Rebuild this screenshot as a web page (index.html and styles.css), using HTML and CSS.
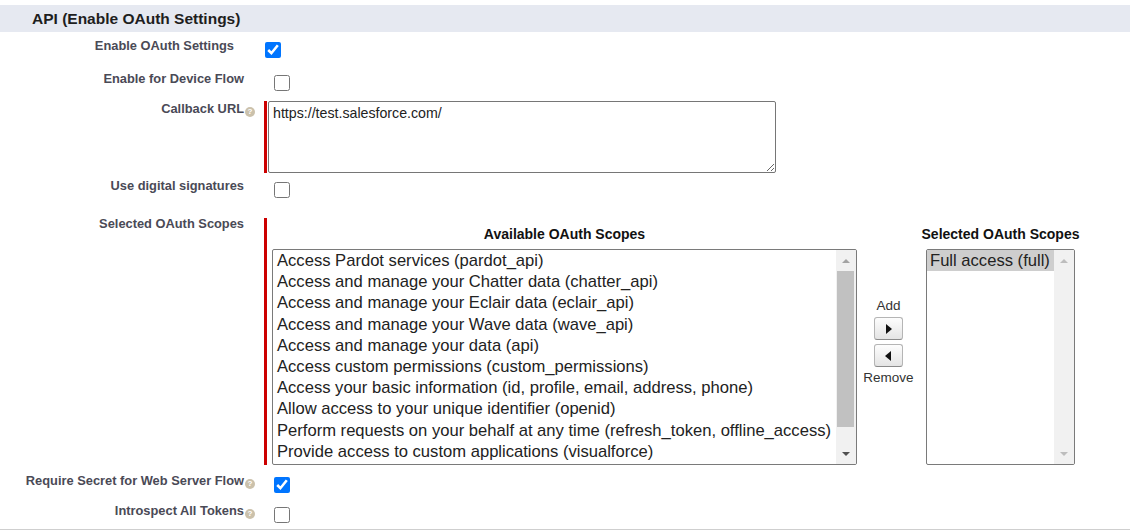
FILE: index.html
```html
<!DOCTYPE html>
<html lang="en">
<head>
<meta charset="utf-8">
<title>API (Enable OAuth Settings)</title>
<link rel="stylesheet" href="styles.css">
</head>
<body>
<div class="section">
  <div class="sub-header"><h3>API (Enable OAuth Settings)</h3></div>
  <div class="form">
    <div class="row row-first">
      <div class="label">Enable OAuth Settings</div>
      <div class="field"><input type="checkbox" class="cb" checked></div>
    </div>
    <div class="row">
      <div class="label">Enable for Device Flow</div>
      <div class="field"><input type="checkbox" class="cb"></div>
    </div>
    <div class="row row-callback">
      <div class="label">Callback URL<span class="help">?</span></div>
      <div class="field field-req">
        <span class="req-bar"></span>
        <textarea class="url-input">https://test.salesforce.com/</textarea>
      </div>
    </div>
    <div class="row row-sig">
      <div class="label">Use digital signatures</div>
      <div class="field"><input type="checkbox" class="cb"></div>
    </div>
    <div class="row row-scopes">
      <div class="label">Selected OAuth Scopes</div>
      <div class="field field-req field-scopes">
        <span class="req-bar"></span>
        <div class="duel">
          <div class="duel-col duel-available">
            <div class="duel-title">Available OAuth Scopes</div>
            <div class="listbox">
              <div class="options">
                <div class="opt">Access Pardot services (pardot_api)</div>
                <div class="opt">Access and manage your Chatter data (chatter_api)</div>
                <div class="opt">Access and manage your Eclair data (eclair_api)</div>
                <div class="opt">Access and manage your Wave data (wave_api)</div>
                <div class="opt">Access and manage your data (api)</div>
                <div class="opt">Access custom permissions (custom_permissions)</div>
                <div class="opt">Access your basic information (id, profile, email, address, phone)</div>
                <div class="opt">Allow access to your unique identifier (openid)</div>
                <div class="opt">Perform requests on your behalf at any time (refresh_token, offline_access)</div>
                <div class="opt">Provide access to custom applications (visualforce)</div>
              </div>
              <div class="sbar">
                <div class="sbtn"><span class="arr-up dim"></span></div>
                <div class="thumb"></div>
                <div class="strack"></div>
                <div class="sbtn"><span class="arr-down"></span></div>
              </div>
            </div>
          </div>
          <div class="duel-buttons">
            <div class="btn-caption">Add</div>
            <button class="arrow-btn" type="button" aria-label="Add"><span class="tri-right"></span></button>
            <button class="arrow-btn" type="button" aria-label="Remove"><span class="tri-left"></span></button>
            <div class="btn-caption btn-caption-bottom">Remove</div>
          </div>
          <div class="duel-col duel-selected">
            <div class="duel-title">Selected OAuth Scopes</div>
            <div class="listbox">
              <div class="options">
                <div class="opt opt-sel">Full access (full)</div>
              </div>
              <div class="sbar">
                <div class="sbtn"><span class="arr-up faint"></span></div>
                <div class="strack"></div>
                <div class="sbtn"><span class="arr-down faint"></span></div>
              </div>
            </div>
          </div>
        </div>
      </div>
    </div>
    <div class="row">
      <div class="label">Require Secret for Web Server Flow<span class="help">?</span></div>
      <div class="field"><input type="checkbox" class="cb" checked></div>
    </div>
    <div class="row row-last">
      <div class="label">Introspect All Tokens<span class="help">?</span></div>
      <div class="field"><input type="checkbox" class="cb"></div>
    </div>
  </div>
  <div class="bottom-rule"></div>
</div>
</body>
</html>
```
FILE: styles.css
```css
html, body {
  margin: 0;
  padding: 0;
  background: #fff;
}

body {
  font-family: "Liberation Sans", Arial, sans-serif;
  color: #222;
}

.sub-header {
  margin-top: 5px;
  height: 27px;
  background: #e6e9f1;
}

.sub-header h3 {
  margin: 0;
  padding-left: 32px;
  font-size: 15.5px;
  font-weight: bold;
  line-height: 27px;
  color: #1e1e1e;
}

.form {
  padding-top: 5px;
}

.row {
  display: grid;
  grid-template-columns: 254px 1fr;
  column-gap: 10px;
  align-items: start;
  padding-bottom: 9px;
}

.row-first { padding-bottom: 12px; }
.row-callback { padding-bottom: 4px; }
.row-sig { padding-bottom: 17px; }
.row-scopes { padding-bottom: 7px; }
.row-last { padding-bottom: 6px; }

.label {
  padding-top: 1px;
  font-size: 12.85px;
  font-weight: bold;
  line-height: 16px;
  color: #4a4a56;
  text-align: right;
  padding-right: 10px;
  white-space: nowrap;
}

.row-first .label { padding-right: 20px; }

.help {
  display: inline-block;
  width: 10px;
  height: 10px;
  margin-left: 1px;
  margin-right: -11px;
  border-radius: 50%;
  background: #cbc1ab;
  color: #fff;
  font-size: 8px;
  font-weight: bold;
  line-height: 10px;
  text-align: center;
  vertical-align: -1px;
}

.field {
  display: flex;
  align-items: flex-start;
}

.cb {
  display: block;
  width: 16px;
  height: 16px;
  margin: 5px 0 0 10px;
}

.row-first .cb { margin-left: 1px; }

.field-req {
  align-items: stretch;
}

.req-bar {
  display: block;
  width: 3px;
  margin-right: 1px;
  background: #c00;
  flex: none;
}

.row-callback .field-req {
  margin-top: 1px;
}

.url-input {
  box-sizing: border-box;
  width: 508px;
  height: 72px;
  margin: 0;
  padding: 3px 4px;
  border: 1px solid #767676;
  border-radius: 2px;
  font-family: "Liberation Sans", Arial, sans-serif;
  font-size: 14.2px;
  color: #222;
  background: #fff;
  outline: none;
}

.field-scopes {
  margin-top: 3px;
}

.duel {
  display: flex;
  align-items: flex-start;
  margin-left: 4px;
  padding-top: 8px;
}

.duel-col {
  display: flex;
  flex-direction: column;
}

.duel-available { width: 585px; }
.duel-selected { width: 149px; }

.duel-title {
  display: flex;
  justify-content: center;
  white-space: nowrap;
  font-size: 14px;
  font-weight: bold;
  line-height: 16px;
  color: #111;
}

.listbox {
  box-sizing: border-box;
  height: 216px;
  margin-top: 7px;
  display: flex;
  border: 1px solid #7a7a7a;
  border-radius: 2px;
  background: #fff;
  overflow: hidden;
}

.options {
  flex: 1;
  min-width: 0;
  font-size: 16.6px;
  line-height: 21.2px;
  color: #222;
}

.opt {
  padding-left: 4px;
  white-space: nowrap;
}

.opt-sel {
  padding-left: 3px;
  background: #cecece;
}

.sbar {
  flex: none;
  width: 20px;
  display: flex;
  flex-direction: column;
  background: #f1f1f1;
}

.sbtn {
  height: 21px;
  flex: none;
  display: flex;
  align-items: center;
  justify-content: center;
}

.thumb {
  height: 156px;
  flex: none;
  margin: 0 2px 0 1px;
  background: #c1c1c1;
}

.strack { flex: 1; }

.arr-up, .arr-down {
  width: 0;
  height: 0;
  border-left: 4px solid transparent;
  border-right: 4px solid transparent;
}

.arr-up { border-bottom: 4px solid #505050; }
.arr-down { border-top: 4px solid #505050; }
.arr-up.dim { border-bottom-color: #a3a3a3; }
.arr-up.faint { border-bottom-color: #bdbdbd; }
.arr-down.faint { border-top-color: #bdbdbd; }

.duel-buttons {
  width: 63px;
  margin-right: 6px;
  padding-top: 72px;
  display: flex;
  flex-direction: column;
  align-items: center;
}

.btn-caption {
  font-size: 13.5px;
  line-height: 16px;
  color: #333;
}

.btn-caption-bottom { margin-top: 3px; }

.arrow-btn {
  box-sizing: border-box;
  width: 29px;
  height: 23px;
  margin: 3px 0 0;
  padding: 0;
  display: flex;
  align-items: center;
  justify-content: center;
  border: 1px solid #b5b5b5;
  border-bottom-color: #8a8a8a;
  border-radius: 3px;
  background: linear-gradient(#fdfdfd, #e4e4e4);
}

.arrow-btn + .arrow-btn { margin-top: 4px; }

.tri-right, .tri-left {
  width: 0;
  height: 0;
  border-top: 5px solid transparent;
  border-bottom: 5px solid transparent;
}

.tri-right { border-left: 6px solid #111; margin-left: 1px; }
.tri-left { border-right: 6px solid #111; margin-right: 1px; }

.bottom-rule {
  height: 1px;
  background: #cfcfcf;
}
```
